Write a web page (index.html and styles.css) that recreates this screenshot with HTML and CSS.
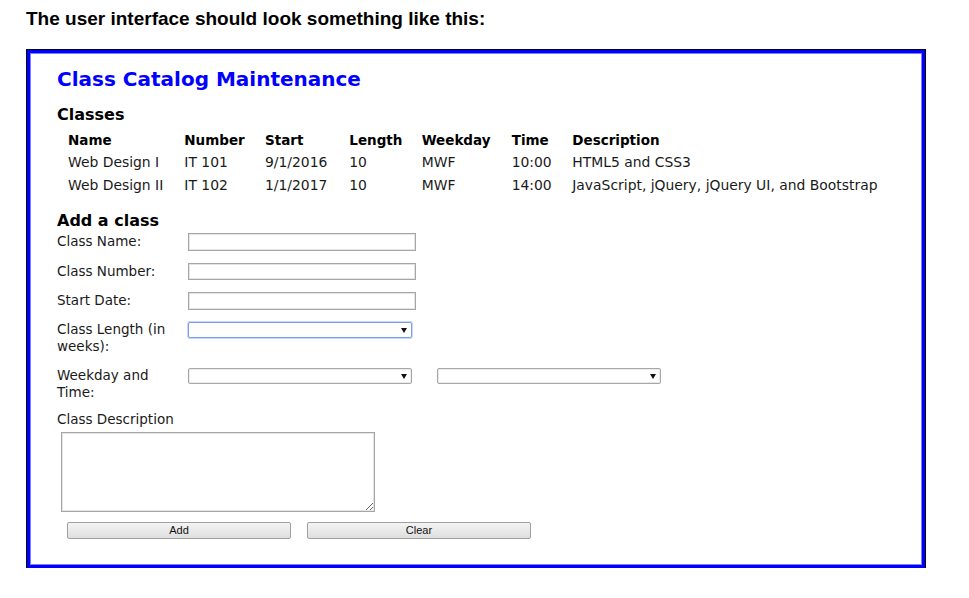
FILE: index.html
```html
<!DOCTYPE html>
<html lang="en">
<head>
    <meta charset="UTF-8">
    <title>Class Catalog Maintenance</title>
    <link rel="stylesheet" href="styles.css">
</head>
<body>
    <p class="intro">The user interface should look something like this:</p>

    <div class="catalog">
        <h1 class="catalog-title">Class Catalog Maintenance</h1>

        <!-- Existing classes -->
        <h2 class="section-title">Classes</h2>
        <table class="class-table">
            <thead>
                <tr>
                    <th class="col-name">Name</th>
                    <th class="col-number">Number</th>
                    <th class="col-start">Start</th>
                    <th class="col-length">Length</th>
                    <th class="col-weekday">Weekday</th>
                    <th class="col-time">Time</th>
                    <th>Description</th>
                </tr>
            </thead>
            <tbody>
                <tr>
                    <td>Web Design I</td>
                    <td>IT 101</td>
                    <td>9/1/2016</td>
                    <td>10</td>
                    <td>MWF</td>
                    <td>10:00</td>
                    <td>HTML5 and CSS3</td>
                </tr>
                <tr>
                    <td>Web Design II</td>
                    <td>IT 102</td>
                    <td>1/1/2017</td>
                    <td>10</td>
                    <td>MWF</td>
                    <td>14:00</td>
                    <td>JavaScript, jQuery, jQuery UI, and Bootstrap</td>
                </tr>
            </tbody>
        </table>

        <!-- New class form -->
        <h2 class="section-title add-title">Add a class</h2>
        <form class="class-form">
            <div class="form-grid">
                <label class="form-label" for="className">Class Name:</label>
                <input class="text-input" type="text" id="className">

                <label class="form-label" for="classNumber">Class Number:</label>
                <input class="text-input" type="text" id="classNumber">

                <label class="form-label" for="startDate">Start Date:</label>
                <input class="text-input" type="text" id="startDate">

                <label class="form-label" for="classLength">Class Length (in weeks):</label>
                <div class="select-row">
                    <span class="select-wrap"><select class="select-input focused" id="classLength"></select></span>
                </div>

                <label class="form-label" for="weekday">Weekday and Time:</label>
                <div class="select-row">
                    <span class="select-wrap"><select class="select-input" id="weekday"></select></span>
                    <span class="select-wrap"><select class="select-input" id="time"></select></span>
                </div>
            </div>

            <label class="form-label desc-label" for="description">Class Description</label>
            <textarea class="desc-input" id="description"></textarea>

            <div class="form-buttons">
                <button type="button" class="form-button">Add</button>
                <button type="button" class="form-button">Clear</button>
            </div>
        </form>
    </div>
</body>
</html>
```

FILE: styles.css
```css
* {
    box-sizing: border-box;
}

body {
    margin: 0;
    background: #ffffff;
    font-family: 'DejaVu Sans', Verdana, sans-serif;
    color: #111111;
}

.intro {
    margin: 8px 0 20px 26px;
    font-family: 'Liberation Sans', Arial, sans-serif;
    font-weight: bold;
    font-size: 19px;
    line-height: 22px;
    color: #000000;
}

/* Framed screenshot of the app */
.catalog {
    width: 898px;
    margin-left: 27px;
    padding: 14px 0 26px 27px;
    border: 3px solid #0000ff;
    box-shadow: 0 0 0 1px #000000, inset 0 0 0 1px #7f7fff;
}

.catalog-title {
    margin: 0;
    font-size: 20px;
    line-height: 24px;
    font-weight: bold;
    color: #0000ff;
}

.section-title {
    margin: 14px 0 0;
    font-size: 16px;
    line-height: 20px;
    font-weight: bold;
    color: #000000;
}

.add-title {
    margin-top: 15.4px;
}

.class-table {
    margin: 3.6px 0 0 11px;
    border-collapse: collapse;
    font-size: 13.5px;
    line-height: 22.5px;
}

.class-table th,
.class-table td {
    padding: 0;
    text-align: left;
    white-space: nowrap;
    vertical-align: top;
}

.class-table th {
    font-weight: bold;
    color: #000000;
}

.class-table td {
    font-size: 13.9px;
    color: #1a1a1a;
}

.col-name { width: 116.3px; }
.col-number { width: 80.7px; }
.col-start { width: 84.3px; }
.col-length { width: 72.4px; }
.col-weekday { width: 90px; }
.col-time { width: 60.6px; }

.class-form {
    margin-top: 2px;
}

.form-grid {
    display: grid;
    grid-template-columns: 120px auto;
    column-gap: 11px;
    row-gap: 11.8px;
    align-items: start;
}

.form-label {
    display: block;
    font-size: 13.5px;
    line-height: 17px;
    color: #1a1a1a;
}

.text-input {
    width: 227.5px;
    height: 17.5px;
    margin: 0;
    padding: 0 2px;
    border: 1px solid #a6a6a6;
    box-shadow: inset 0 0 0 1px #e4e4e4;
    background: #ffffff;
    font: inherit;
}

.select-row {
    display: flex;
    gap: 25px;
    padding-top: 1px;
}

.select-wrap {
    position: relative;
    display: block;
}

.select-wrap::after {
    content: '';
    position: absolute;
    right: 5px;
    top: 6px;
    border-left: 3px solid transparent;
    border-right: 3px solid transparent;
    border-top: 5px solid #111111;
    pointer-events: none;
}

.select-input {
    display: block;
    width: 224px;
    height: 16px;
    margin: 0;
    padding: 0;
    border: 1px solid #a6a6a6;
    border-radius: 2px;
    box-shadow: inset 0 0 0 1px #ececec;
    background: #ffffff;
    appearance: none;
    -webkit-appearance: none;
}

.select-input.focused {
    border-color: #7d9ee4;
    box-shadow: 0 0 0 1px #c9d8f6;
}

.desc-label {
    margin-top: 9.5px;
}

.desc-input {
    display: block;
    width: 314px;
    height: 80px;
    margin: 4px 0 0 4px;
    border: 1px solid #a6a6a6;
    box-shadow: inset 0 0 0 1px #e4e4e4;
    resize: both;
}

.form-buttons {
    display: flex;
    gap: 16px;
    margin: 10px 0 0 10px;
}

.form-button {
    width: 224px;
    height: 17px;
    margin: 0;
    padding: 0;
    border: 1px solid #a0a0a0;
    border-radius: 2px;
    background: linear-gradient(#f4f4f4, #dedede);
    font-family: 'Liberation Sans', Arial, sans-serif;
    font-size: 11px;
    line-height: 15px;
    color: #111111;
}
```
